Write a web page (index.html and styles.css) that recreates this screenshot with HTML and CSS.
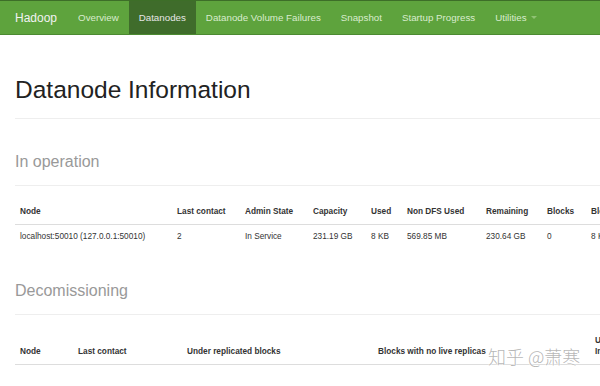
FILE: index.html
```html
<!DOCTYPE html>
<html lang="en">
<head>
    <meta charset="UTF-8">
    <title>Datanode Information</title>
    <link rel="stylesheet" href="styles.css">
</head>
<body>
    <nav class="navbar">
        <a class="brand" href="#">Hadoop</a>
        <ul class="nav">
            <li><a href="#">Overview</a></li>
            <li class="active"><a href="#">Datanodes</a></li>
            <li><a href="#">Datanode Volume Failures</a></li>
            <li><a href="#">Snapshot</a></li>
            <li><a href="#">Startup Progress</a></li>
            <li><a href="#">Utilities <span class="caret"></span></a></li>
        </ul>
    </nav>

    <div class="container">
        <div class="page-header page-title">
            <h1>Datanode Information</h1>
        </div>

        <div class="page-header">
            <h2>In operation</h2>
        </div>
        <table class="table table-live">
            <colgroup>
                <col class="c-node"><col class="c-contact"><col class="c-admin"><col class="c-cap">
                <col class="c-used"><col class="c-nondfs"><col class="c-remain"><col class="c-blocks">
                <col class="c-pool">
            </colgroup>
            <thead>
                <tr>
                    <th>Node</th>
                    <th>Last contact</th>
                    <th>Admin State</th>
                    <th>Capacity</th>
                    <th>Used</th>
                    <th>Non DFS Used</th>
                    <th>Remaining</th>
                    <th>Blocks</th>
                    <th>Block pool used</th>
                </tr>
            </thead>
            <tbody>
                <tr>
                    <td>localhost:50010 (127.0.0.1:50010)</td>
                    <td>2</td>
                    <td>In Service</td>
                    <td>231.19 GB</td>
                    <td>8 KB</td>
                    <td>569.85 MB</td>
                    <td>230.64 GB</td>
                    <td>0</td>
                    <td>8 KB (0%)</td>
                </tr>
            </tbody>
        </table>

        <div class="page-header page-decom">
            <h2>Decomissioning</h2>
        </div>
        <table class="table table-decom">
            <colgroup>
                <col class="d-node"><col class="d-contact"><col class="d-under">
                <col class="d-nolive"><col class="d-files">
            </colgroup>
            <thead>
                <tr>
                    <th>Node</th>
                    <th>Last contact</th>
                    <th>Under replicated blocks</th>
                    <th>Blocks with no live replicas</th>
                    <th>Under Replicated Blocks<br>In files under construction</th>
                </tr>
            </thead>
        </table>
    </div>

    <div class="watermark">知乎 @萧寒</div>
</body>
</html>
```

FILE: styles.css
```css
html, body {
    margin: 0;
    overflow: hidden;
}
body {
    font-family: "Liberation Sans", Arial, sans-serif;
    color: #333;
    background: #fff;
}
a {
    text-decoration: none;
}

/* top bar */
.navbar {
    display: flex;
    align-items: stretch;
    height: 33px;
    padding-left: 15px;
    background: #5ea33d;
    border-top: 1px solid #3d6e28;
    border-bottom: 1px solid #4c8a31;
}
.brand {
    display: flex;
    align-items: center;
    margin-right: 11px;
    font-size: 12px;
    color: #f2f2f2;
}
.nav {
    display: flex;
    margin: 0;
    padding: 0;
    list-style: none;
}
.nav li {
    display: flex;
}
.nav a {
    display: flex;
    align-items: center;
    padding: 0 10px;
    font-size: 9.75px;
    color: #d9ecce;
    white-space: nowrap;
}
.nav .active a {
    background: #3f6c2b;
    color: #e6e6e6;
}
.caret {
    display: inline-block;
    width: 0;
    height: 0;
    margin-left: 4px;
    border-top: 3px solid #8fc274;
    border-left: 3px solid transparent;
    border-right: 3px solid transparent;
}

/* content */
.container {
    padding: 0 0 0 15px;
    width: 1000px;
}
.page-header {
    margin: 34px 0 14px;
    padding-bottom: 14px;
    border-bottom: 1px solid #eee;
}
.page-title {
    margin-top: 42px;
}
.page-decom {
    margin-top: 34px;
}
h1 {
    margin: 0;
    font-size: 24.5px;
    font-weight: 500;
    line-height: 1.1;
    color: #222;
}
h2 {
    margin: 0;
    font-size: 16px;
    font-weight: 400;
    line-height: 18px;
    color: #999;
}

.table {
    table-layout: fixed;
    border-collapse: collapse;
    font-size: 8.25px;
    line-height: 11.8px;
    margin-bottom: 2px;
}
.table-live {
    width: 671px;
}
.table-decom {
    width: 675px;
}
.table th,
.table td {
    padding: 6px 5px 5px;
    text-align: left;
    vertical-align: bottom;
    white-space: nowrap;
}
.table th {
    padding-bottom: 6px;
    font-weight: 700;
    border-bottom: 1px solid #ddd;
}

.c-node { width: 157px; }
.c-contact { width: 68px; }
.c-admin { width: 68px; }
.c-cap { width: 58px; }
.c-used { width: 36px; }
.c-nondfs { width: 79px; }
.c-remain { width: 61px; }
.c-blocks { width: 44px; }

.d-node { width: 58px; }
.d-contact { width: 109px; }
.d-under { width: 191px; }
.d-nolive { width: 217px; }

.watermark {
    position: absolute;
    left: 488px;
    top: 343px;
    font-family: "Noto Sans CJK SC", sans-serif;
    font-size: 18px;
    font-weight: 300;
    line-height: 26px;
    color: rgba(150, 150, 150, 0.7);
    text-shadow: 0 0 1px #fff, 0 0 1px #fff, 0 0 2px #fff;
}
```
